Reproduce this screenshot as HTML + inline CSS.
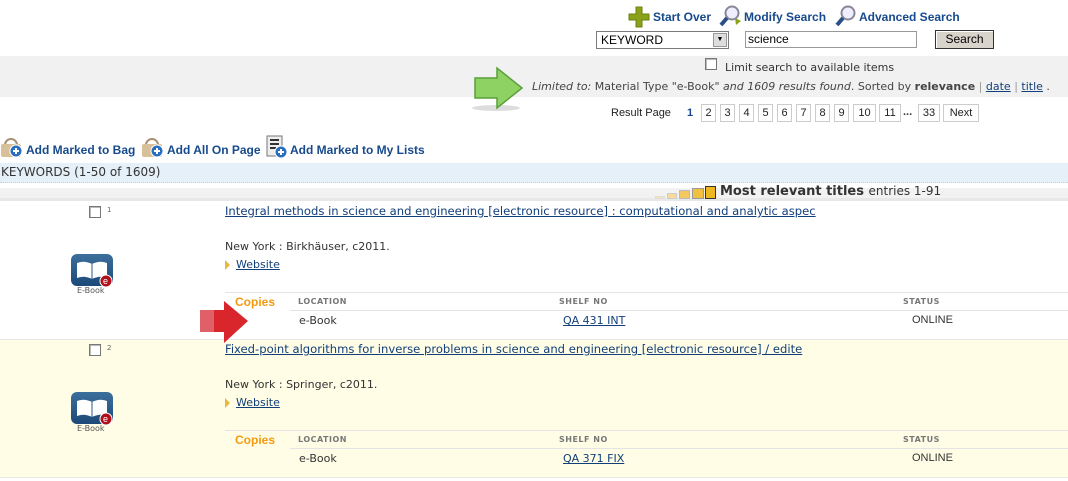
<!DOCTYPE html>
<html><head><meta charset="utf-8"><style>
*{margin:0;padding:0;box-sizing:border-box}
body{width:1068px;height:481px;overflow:hidden;background:#fff;font-family:"DejaVu Sans","Liberation Sans",sans-serif;color:#333;position:relative}
.a{position:absolute;white-space:nowrap}
.tl{font-family:"Liberation Sans",sans-serif;font-weight:bold;font-size:12px;color:#174a8c}
a{color:#123f7a;text-decoration:underline}
.pg{position:absolute;top:104px;height:18px;border:1px solid #ccc;font-family:"Liberation Sans",sans-serif;font-size:11px;color:#222;text-align:center;line-height:16px;background:#fff}
.hdr{font-size:8px;font-weight:bold;color:#777;letter-spacing:.5px}
.line{position:absolute;height:1px;background:#e4e4e4}
.ebook{position:absolute;width:42px;height:32px;border-radius:6px;background:linear-gradient(#3d6f9c,#1d4a78)}
.cb{position:absolute;width:12px;height:12px;border:1px solid #777;background:#fff;box-shadow:inset 1px 1px 0 #bbb}
</style></head><body>
<svg class="a" style="left:627px;top:5px" width="24" height="24" viewBox="0 0 24 24"><path d="M9 2h6v7h7v6h-7v7H9v-7H2V9h7z" fill="#8aa21a" stroke="#6b8010" stroke-linejoin="round"/></svg>
<div class="a tl" style="left:653px;top:10px">Start Over</div>
<svg class="a" style="left:718px;top:4px" width="24" height="24"><circle cx="14" cy="9" r="6.5" fill="#eef" stroke="#889" stroke-width="2"/><path d="M9 14l-6 7" stroke="#2a4f88" stroke-width="4"/><path d="M17 14l6 3-5 4z" fill="#8aa21a"/></svg>
<div class="a tl" style="left:744px;top:10px">Modify Search</div>
<svg class="a" style="left:834px;top:4px" width="24" height="24"><circle cx="14" cy="9" r="6.5" fill="#eef" stroke="#889" stroke-width="2"/><path d="M9 14l-6 7" stroke="#2a4f88" stroke-width="4"/></svg>
<div class="a tl" style="left:859px;top:10px">Advanced Search</div>
<div class="a" style="left:596px;top:31px;width:133px;height:18px;border:1px solid #7a7a7a;background:#fff;font-family:'Liberation Sans',sans-serif;font-size:12px;line-height:16px;padding-left:4px;color:#000">KEYWORD<div class="a" style="right:1px;top:1px;width:14px;height:14px;background:#ddd;border:1px solid #999;font-size:7px;text-align:center;line-height:12px">▼</div></div>
<div class="a" style="left:745px;top:31px;width:172px;height:17px;border:1px solid #999;background:#fff;font-family:'Liberation Sans',sans-serif;font-size:12px;line-height:15px;padding-left:2px;color:#000">science</div>
<div class="a" style="left:935px;top:30px;width:59px;height:19px;border:1px solid #333;background:#d8d4cc;font-family:'Liberation Sans',sans-serif;font-size:12px;line-height:17px;text-align:center;color:#000;box-shadow:inset 1px 1px 0 #fff">Search</div>
<div class="a" style="left:0;top:56px;width:1068px;height:41px;background:#f1f1f1"></div>
<div class="cb" style="left:705px;top:58px"></div>
<div class="a" style="left:725px;top:61px;font-size:11px;color:#333">Limit search to available items</div>
<svg class="a" style="left:470px;top:64px" width="60" height="50"><ellipse cx="26" cy="44" rx="24" ry="3" fill="#ddd"/><path d="M5 14h22V4l25 20-25 20V34H5z" fill="#8fd264" stroke="#5aa03a" stroke-width="1.5"/></svg>
<div class="a" style="left:532px;top:80px;font-size:11px;color:#444"><i>Limited to:</i> Material Type "e-Book" <i>and 1609 results found</i>. Sorted by <b>relevance</b> <span style="color:#999">|</span> <a>date</a> <span style="color:#999">|</span> <a>title</a> .</div>
<div class="a" style="left:611px;top:107px;font-family:'Liberation Sans',sans-serif;font-size:11px;color:#222">Result Page</div>
<div class="a" style="left:687px;top:107px;font-family:'Liberation Sans',sans-serif;font-size:11px;color:#174a8c;font-weight:bold">1</div>
<div class="pg" style="left:701px;width:15px">2</div>
<div class="pg" style="left:720px;width:15px">3</div>
<div class="pg" style="left:739px;width:15px">4</div>
<div class="pg" style="left:758px;width:15px">5</div>
<div class="pg" style="left:777px;width:15px">6</div>
<div class="pg" style="left:796px;width:15px">7</div>
<div class="pg" style="left:815px;width:15px">8</div>
<div class="pg" style="left:834px;width:15px">9</div>
<div class="pg" style="left:853px;width:23px">10</div>
<div class="pg" style="left:879px;width:22px">11</div>
<div class="a" style="left:903px;top:106px;font-family:'Liberation Sans',sans-serif;font-size:11px;font-weight:bold">...</div>
<div class="pg" style="left:918px;width:22px">33</div>
<div class="pg" style="left:943px;width:36px">Next</div>
<svg class="a" style="left:0;top:136px" width="24" height="22"><path d="M5 9a6 6 0 0 1 12 0" fill="none" stroke="#a89070" stroke-width="2"/><rect x="1" y="8" width="20" height="13" rx="2" fill="#d8c098"/><circle cx="16" cy="15" r="6" fill="#2a6ec0" stroke="#fff"/><path d="M13 15h6M16 12v6" stroke="#fff" stroke-width="2"/></svg>
<div class="a tl" style="left:26px;top:143px">Add Marked to Bag</div>
<svg class="a" style="left:141px;top:136px" width="24" height="22"><path d="M5 9a6 6 0 0 1 12 0" fill="none" stroke="#a89070" stroke-width="2"/><rect x="1" y="8" width="20" height="13" rx="2" fill="#d8c098"/><circle cx="16" cy="15" r="6" fill="#2a6ec0" stroke="#fff"/><path d="M13 15h6M16 12v6" stroke="#fff" stroke-width="2"/></svg>
<div class="a tl" style="left:167px;top:143px">Add All On Page</div>
<svg class="a" style="left:266px;top:135px" width="22" height="24"><rect x="1" y="1" width="15" height="20" fill="#eee" stroke="#777"/><path d="M4 5h9M4 9h9M4 13h6" stroke="#333" stroke-width="2"/><circle cx="15" cy="17" r="6" fill="#2a6ec0" stroke="#fff"/><path d="M12 17h6M15 14v6" stroke="#fff" stroke-width="2"/></svg>
<div class="a tl" style="left:290px;top:143px">Add Marked to My Lists</div>
<div class="a" style="left:0;top:163px;width:1068px;height:20px;background:#e5f0f8;border-bottom:1px dotted #ccc;font-size:12px;line-height:19px;color:#333;padding-left:1px">KEYWORDS (1-50 of 1609)</div>
<div class="a" style="left:0;top:188px;width:1068px;height:13px;background:#f2f2f2;border-bottom:3px solid #e8e8e8"></div>
<div class="a" style="left:655px;top:196px;width:10px;height:3px;background:#f6e4b0;border:1px solid #ddd"></div>
<div class="a" style="left:667px;top:193px;width:10px;height:6px;background:#f6dc98;border:1px solid #ccc"></div>
<div class="a" style="left:679px;top:190px;width:11px;height:9px;background:#f3c860;border:1px solid #bbb"></div>
<div class="a" style="left:692px;top:188px;width:12px;height:11px;background:#f0c040;border:1px solid #999"></div>
<div class="a" style="left:705px;top:186px;width:11px;height:13px;background:#f0b820;border:1px solid #333"></div>
<div class="a" style="left:720px;top:184px;font-size:13px;font-weight:bold;color:#333">Most relevant titles <span style="font-weight:normal;font-size:12px">entries 1-91</span></div>
<div class="cb" style="left:89px;top:206px"></div>
<div class="a" style="left:107px;top:206px;font-size:7px;color:#666">1</div>
<div class="a" style="left:225px;top:204px;font-size:11.6px"><a>Integral methods in science and engineering [electronic resource] : computational and analytic aspec</a></div>
<div class="ebook" style="left:71px;top:254px"></div>
<svg class="a" style="left:71px;top:254px" width="44" height="34"><path d="M6 9q7-3 15 1 8-4 15-1v15q-7-3-15 1-8-4-15-1z" fill="#fff"/><path d="M21 10v15" stroke="#2a5a88"/><circle cx="35" cy="27" r="6" fill="#b0101a" stroke="#fff"/><text x="32" y="30" font-size="9" fill="#fff" font-family="Liberation Sans">e</text></svg>
<div class="a" style="left:77px;top:286px;font-size:8px;color:#555">E-Book</div>
<div class="a" style="left:225px;top:240px;font-size:11px;color:#333">New York : Birkhäuser, c2011.</div>
<div class="a" style="left:225px;top:260px;width:0;height:0;border-left:5px solid #e8b840;border-top:5px solid transparent;border-bottom:5px solid transparent"></div>
<div class="a" style="left:236px;top:258px;font-size:11px"><a>Website</a></div>
<div class="line" style="left:225px;top:292px;width:843px"></div>
<div class="a" style="left:235px;top:295px;font-size:12px;color:#f39a10;font-weight:bold;font-family:'Liberation Sans',sans-serif">Copies</div>
<div class="a hdr" style="left:298px;top:297px">LOCATION</div>
<div class="a hdr" style="left:559px;top:297px">SHELF NO</div>
<div class="a hdr" style="left:903px;top:297px">STATUS</div>
<div class="line" style="left:290px;top:310px;width:778px"></div>
<div class="a" style="left:299px;top:314px;font-size:11px">e-Book</div>
<div class="a" style="left:563px;top:314px;font-size:11px"><a>QA 431 INT</a></div>
<div class="a" style="left:912px;top:314px;font-size:11px;font-family:'Liberation Sans',sans-serif">ONLINE</div>
<div class="a" style="left:0;top:339px;width:1068px;height:139px;background:#fffde6;border-top:1px solid #e6e6e6;border-bottom:1px solid #e6e6e6"></div>
<svg class="a" style="left:199px;top:300px" width="52" height="46"><path d="M1 10h24V1l24 20-24 22V32H1z" fill="#d8262c"/><path d="M1 10h14v22H1z" fill="#e06068"/></svg>
<div class="cb" style="left:89px;top:344px"></div>
<div class="a" style="left:107px;top:344px;font-size:7px;color:#666">2</div>
<div class="a" style="left:225px;top:342px;font-size:11.6px"><a>Fixed-point algorithms for inverse problems in science and engineering [electronic resource] / edite</a></div>
<div class="ebook" style="left:71px;top:392px"></div>
<svg class="a" style="left:71px;top:392px" width="44" height="34"><path d="M6 9q7-3 15 1 8-4 15-1v15q-7-3-15 1-8-4-15-1z" fill="#fff"/><path d="M21 10v15" stroke="#2a5a88"/><circle cx="35" cy="27" r="6" fill="#b0101a" stroke="#fff"/><text x="32" y="30" font-size="9" fill="#fff" font-family="Liberation Sans">e</text></svg>
<div class="a" style="left:77px;top:424px;font-size:8px;color:#555">E-Book</div>
<div class="a" style="left:225px;top:378px;font-size:11px;color:#333">New York : Springer, c2011.</div>
<div class="a" style="left:225px;top:398px;width:0;height:0;border-left:5px solid #e8b840;border-top:5px solid transparent;border-bottom:5px solid transparent"></div>
<div class="a" style="left:236px;top:396px;font-size:11px"><a>Website</a></div>
<div class="line" style="left:225px;top:430px;width:843px"></div>
<div class="a" style="left:235px;top:433px;font-size:12px;color:#f39a10;font-weight:bold;font-family:'Liberation Sans',sans-serif">Copies</div>
<div class="a hdr" style="left:298px;top:435px">LOCATION</div>
<div class="a hdr" style="left:559px;top:435px">SHELF NO</div>
<div class="a hdr" style="left:903px;top:435px">STATUS</div>
<div class="line" style="left:290px;top:448px;width:778px"></div>
<div class="a" style="left:299px;top:452px;font-size:11px">e-Book</div>
<div class="a" style="left:563px;top:452px;font-size:11px"><a>QA 371 FIX</a></div>
<div class="a" style="left:912px;top:452px;font-size:11px;font-family:'Liberation Sans',sans-serif">ONLINE</div>
</body></html>
